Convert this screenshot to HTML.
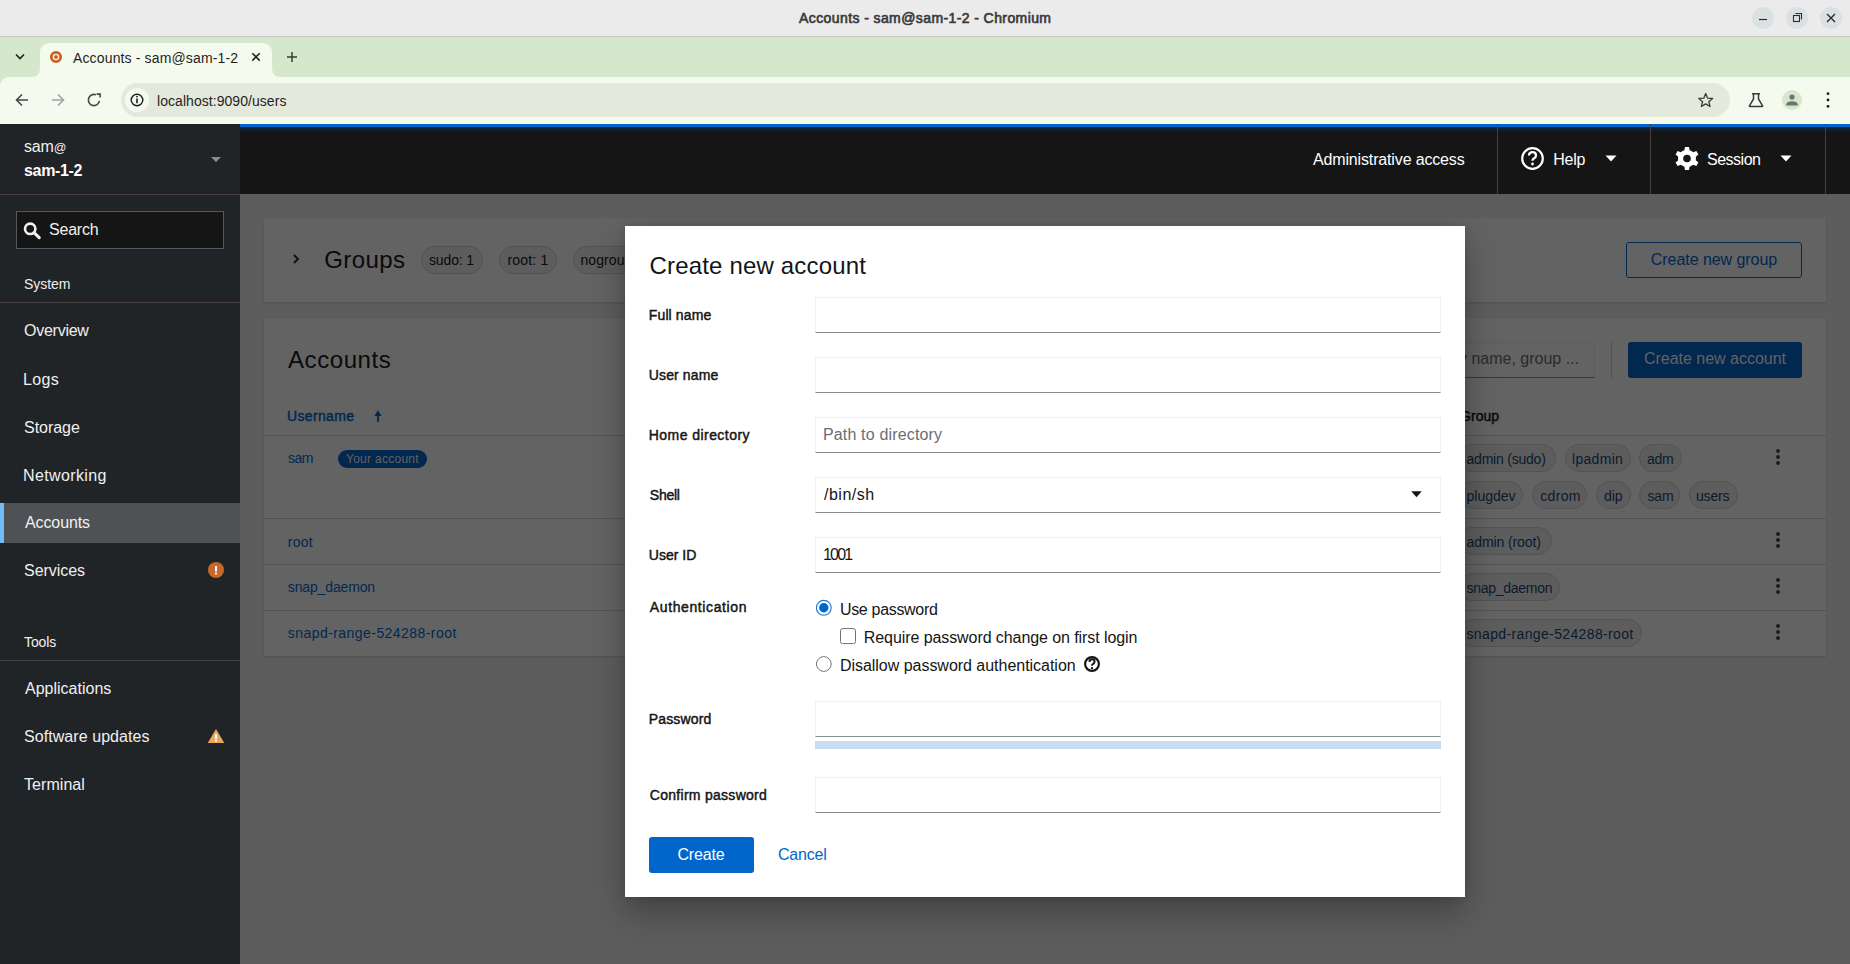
<!DOCTYPE html>
<html><head><meta charset="utf-8">
<style>
*{box-sizing:border-box;margin:0;padding:0}
html,body{width:1850px;height:964px;overflow:hidden;font-family:"Liberation Sans",sans-serif;background:#5d5d5d}
.a{position:absolute}
.t{white-space:nowrap}
svg{position:absolute;overflow:visible}
</style></head><body>
<div class="a" style="left:0px;top:0px;width:1850px;height:37px;background:#ebebeb"></div>
<div class="a" style="left:0px;top:36px;width:1850px;height:1px;background:#c9c9c9"></div>
<div id="t1" class="a t" style="left:799.00px;top:11.35px;font-size:14px;line-height:14px;color:#3a3a3a;letter-spacing:0.406px;-webkit-text-stroke:0.65px #3a3a3a">Accounts - sam@sam-1-2 - Chromium</div>
<div class="a" style="left:1752px;top:7px;width:22px;height:22px;border-radius:50%;background:#dbe1e3"></div>
<div class="a" style="left:1786px;top:7px;width:22px;height:22px;border-radius:50%;background:#dbe1e3"></div>
<div class="a" style="left:1820px;top:7px;width:22px;height:22px;border-radius:50%;background:#dbe1e3"></div>
<svg style="left:0;top:0" width="1850" height="36"><line x1="1759" y1="19.5" x2="1767" y2="19.5" stroke="#2b2b2b" stroke-width="1.2"/><rect x="1793.5" y="15.5" width="6" height="6" fill="none" stroke="#2b2b2b" stroke-width="1.1"/><path d="M1795.5 13.5 H1801.5 V19.5" fill="none" stroke="#2b2b2b" stroke-width="1.1"/><path d="M1827 14 L1835 22 M1835 14 L1827 22" stroke="#2b2b2b" stroke-width="1.4"/></svg>
<div class="a" style="left:0px;top:37px;width:1850px;height:40px;background:#d5e8cb"></div>
<div class="a" style="left:40px;top:43px;width:232px;height:40px;background:#f4faee;border-radius:9px 9px 0 0"></div>
<svg style="left:0;top:0" width="400" height="90"><path d="M31 77 Q40 77 40 68 L40 77 Z" fill="#f4faee"/><path d="M281 77 Q272 77 272 68 L272 77 Z" fill="#f4faee"/><path d="M16 54.5 L20 58.5 L24 54.5" fill="none" stroke="#1f1f1f" stroke-width="1.6"/><circle cx="56" cy="57" r="4.7" fill="none" stroke="#cc5f1d" stroke-width="2.8"/><circle cx="56" cy="57" r="1.9" fill="#cc5f1d"/><path d="M252.3 53.2 L259.7 60.6 M259.7 53.2 L252.3 60.6" stroke="#1f1f1f" stroke-width="1.5"/><path d="M287 57 H297 M292 52 V62" stroke="#3b3b3b" stroke-width="1.5"/></svg>
<div id="t2" class="a t" style="left:73.00px;top:50.65px;font-size:14px;line-height:14px;color:#1f1f1f;letter-spacing:0.143px;">Accounts - sam@sam-1-2</div>
<div class="a" style="left:0px;top:77px;width:1850px;height:47px;background:#f4faee"></div>
<div class="a" style="left:0px;top:77px;width:10px;height:10px;background:#d5e8cb"></div>
<div class="a" style="left:0px;top:77px;width:10px;height:10px;background:#f4faee;border-radius:9px 0 0 0"></div>
<div class="a" style="left:121px;top:83px;width:1609px;height:34px;background:#e3eadc;border-radius:17px"></div>
<div class="a" style="left:125px;top:88px;width:24px;height:24px;background:#f4faee;border-radius:50%"></div>
<svg style="left:0;top:0" width="1850" height="124"><path d="M28 100 H17 M22 94.5 L16.5 100 L22 105.5" fill="none" stroke="#474747" stroke-width="1.6"/><path d="M52 100 H63 M58 94.5 L63.5 100 L58 105.5" fill="none" stroke="#a3a3a3" stroke-width="1.6"/><path d="M95.9 94.74 A5.6 5.6 0 1 0 99.51 100.97" fill="none" stroke="#474747" stroke-width="1.6"/><path d="M96.6 94.1 H100.1 V97.6" fill="none" stroke="#474747" stroke-width="1.6"/><circle cx="137" cy="100" r="5.8" fill="none" stroke="#1f1f1f" stroke-width="1.4"/><path d="M137 98.6 V103.2" stroke="#1f1f1f" stroke-width="1.6"/><circle cx="137" cy="96.6" r="0.9" fill="#1f1f1f"/><path d="M1705.7 93.5 L1707.6 98.2 L1712.6 98.5 L1708.8 101.7 L1710 106.5 L1705.7 103.9 L1701.4 106.5 L1702.6 101.7 L1698.8 98.5 L1703.8 98.2 Z" fill="none" stroke="#3b3b3b" stroke-width="1.3" stroke-linejoin="round"/><path d="M1752 93.8 H1760 M1753.5 93.8 V99 L1749.6 105.6 Q1749 106.6 1750.2 106.6 H1761.8 Q1763 106.6 1762.4 105.6 L1758.5 99 V93.8" fill="none" stroke="#3b3b3b" stroke-width="1.5"/><circle cx="1792" cy="100" r="10" fill="#d5e8cb"/><circle cx="1792" cy="97" r="2.6" fill="#6a7572"/><path d="M1786 105.6 Q1786 101.3 1792 101.3 Q1798 101.3 1798 105.6 Z" fill="#6a7572"/><circle cx="1828" cy="93.7" r="1.4" fill="#1f1f1f"/><circle cx="1828" cy="100" r="1.4" fill="#1f1f1f"/><circle cx="1828" cy="106.3" r="1.4" fill="#1f1f1f"/></svg>
<div id="t3" class="a t" style="left:157.00px;top:93.65px;font-size:14px;line-height:14px;color:#1f1f1f;letter-spacing:0.053px;">localhost:9090/users</div>
<div class="a" style="left:0px;top:124px;width:240px;height:840px;background:#212427"></div>
<div id="t4" class="a t" style="left:24.00px;top:138.96px;font-size:16px;line-height:16px;color:#f0f0f0;letter-spacing:-0.2px">sam<span style="font-size:12.5px;letter-spacing:0">@</span></div>
<div id="t5" class="a t" style="left:24.00px;top:162.96px;font-size:16px;line-height:16px;font-weight:bold;color:#ffffff;letter-spacing:-0.333px;">sam-1-2</div>
<svg style="left:0;top:0" width="240" height="964"><path d="M211 157 H221 L216 162 Z" fill="#8a8d90"/></svg>
<div class="a" style="left:0px;top:194px;width:240px;height:1px;background:#4a3f3f"></div>
<div class="a" style="left:16px;top:211px;width:208px;height:38px;background:#151515;border:1px solid #56595d"></div>
<svg style="left:0;top:0" width="240" height="300"><circle cx="30.2" cy="228.8" r="5.2" fill="none" stroke="#f0f0f0" stroke-width="2.6"/><path d="M34 232.6 L39.2 237.6" stroke="#f0f0f0" stroke-width="3.2" stroke-linecap="round"/></svg>
<div id="t6" class="a t" style="left:49.00px;top:221.66px;font-size:16px;line-height:16px;color:#f0f0f0;letter-spacing:-0.200px;">Search</div>
<div id="t7" class="a t" style="left:24.00px;top:276.65px;font-size:14px;line-height:14px;color:#f0f0f0;letter-spacing:-0.040px;">System</div>
<div class="a" style="left:0px;top:302px;width:240px;height:1px;background:#4a3f3f"></div>
<div class="a" style="left:0px;top:503px;width:240px;height:40px;background:#4f5255"></div>
<div class="a" style="left:0px;top:503px;width:4px;height:40px;background:#73bcf7"></div>
<div id="t8" class="a t" style="left:24.00px;top:323.46px;font-size:16px;line-height:16px;color:#f0f0f0;letter-spacing:-0.251px;">Overview</div>
<div id="t9" class="a t" style="left:23.00px;top:371.56px;font-size:16px;line-height:16px;color:#f0f0f0;letter-spacing:0.333px;">Logs</div>
<div id="t10" class="a t" style="left:24.00px;top:419.66px;font-size:16px;line-height:16px;color:#f0f0f0;letter-spacing:-0.035px;">Storage</div>
<div id="t11" class="a t" style="left:23.00px;top:467.56px;font-size:16px;line-height:16px;color:#f0f0f0;letter-spacing:0.379px;">Networking</div>
<div id="t12" class="a t" style="left:25.00px;top:515.26px;font-size:16px;line-height:16px;color:#f0f0f0;letter-spacing:-0.108px;">Accounts</div>
<div id="t13" class="a t" style="left:24.00px;top:562.96px;font-size:16px;line-height:16px;color:#f0f0f0;letter-spacing:-0.035px;">Services</div>
<div id="t14" class="a t" style="left:24.00px;top:634.65px;font-size:14px;line-height:14px;color:#f0f0f0;letter-spacing:-0.100px;">Tools</div>
<div class="a" style="left:0px;top:660px;width:240px;height:1px;background:#4a3f3f"></div>
<div id="t15" class="a t" style="left:25.00px;top:680.96px;font-size:16px;line-height:16px;color:#f0f0f0;letter-spacing:-0.000px;">Applications</div>
<div id="t16" class="a t" style="left:24.00px;top:729.26px;font-size:16px;line-height:16px;color:#f0f0f0;letter-spacing:0.067px;">Software updates</div>
<div id="t17" class="a t" style="left:24.00px;top:776.96px;font-size:16px;line-height:16px;color:#f0f0f0;letter-spacing:0.054px;">Terminal</div>
<svg style="left:0;top:0" width="240" height="964"><circle cx="216" cy="570" r="8" fill="#c7672c"/><path d="M216 566 V571.6" stroke="#fff" stroke-width="2"/><rect x="215" y="572.6" width="2" height="1.8" fill="#fff"/><path d="M216 728.9 L224.3 743 H207.7 Z" fill="#eaa85c"/><rect x="215.1" y="734.2" width="1.9" height="5" fill="#fff"/><rect x="215.1" y="739.8" width="1.9" height="1.8" fill="#fff"/></svg>
<div class="a" style="left:240px;top:124px;width:1610px;height:70px;background:#151515"></div>
<div class="a" style="left:240px;top:124px;width:1610px;height:3px;background:#0066cc"></div>
<div class="a" style="left:240px;top:127px;width:1610px;height:5px;background:linear-gradient(rgba(0,70,150,.45),rgba(0,50,120,0))"></div>
<div class="a" style="left:1497px;top:124px;width:1px;height:70px;background:#4a3e3e"></div>
<div class="a" style="left:1650px;top:124px;width:1px;height:70px;background:#4a3e3e"></div>
<div class="a" style="left:1825px;top:124px;width:1px;height:70px;background:#4a3e3e"></div>
<div id="t18" class="a t" style="left:1313.00px;top:151.66px;font-size:16px;line-height:16px;color:#ffffff;letter-spacing:-0.150px;">Administrative access</div>
<div id="t19" class="a t" style="left:1553.20px;top:151.66px;font-size:16px;line-height:16px;color:#ffffff;letter-spacing:-0.203px;">Help</div>
<div id="t20" class="a t" style="left:1707.00px;top:151.66px;font-size:16px;line-height:16px;color:#ffffff;letter-spacing:-0.500px;">Session</div>
<svg style="left:0;top:0" width="1850" height="200"><circle cx="1532.5" cy="158.5" r="10.3" fill="none" stroke="#fff" stroke-width="2.2"/><path d="M1529 155.6 Q1529 152.2 1532.5 152.2 Q1536 152.2 1536 155.4 Q1536 157.4 1533.6 158.6 Q1532.5 159.3 1532.5 160.8" fill="none" stroke="#fff" stroke-width="2.3"/><circle cx="1532.5" cy="164" r="1.4" fill="#fff"/><path d="M1605.5 155.5 H1616.5 L1611 161.5 Z" fill="#fff"/><path d="M1780.5 155.5 H1791.5 L1786 161.5 Z" fill="#fff"/><g transform="translate(1687 158.5)"><path d="M-2 -11.5 H2 L2.6 -8.2 Q4.6 -7.5 6.2 -6.3 L9.4 -7.4 L11.4 -4 L8.8 -1.7 Q9.1 0 8.8 1.7 L11.4 4 L9.4 7.4 L6.2 6.3 Q4.6 7.5 2.6 8.2 L2 11.5 H-2 L-2.6 8.2 Q-4.6 7.5 -6.2 6.3 L-9.4 7.4 L-11.4 4 L-8.8 1.7 Q-9.1 0 -8.8 -1.7 L-11.4 -4 L-9.4 -7.4 L-6.2 -6.3 Q-4.6 -7.5 -2.6 -8.2 Z" fill="#fff"/><circle cx="0" cy="0" r="3.8" fill="#151515"/></g></svg>
<div class="a" style="left:240px;top:194px;width:1610px;height:770px;background:#5d5d5d"></div>
<div class="a" style="left:264px;top:218px;width:1562px;height:84px;background:#636363;box-shadow:0 1px 2px rgba(3,3,3,.12)"></div>
<div class="a" style="left:264px;top:318px;width:1562px;height:338px;background:#636363;box-shadow:0 1px 2px rgba(3,3,3,.12)"></div>
<svg style="left:0;top:0" width="1850" height="964"><path d="M294 255 L298 259 L294 263" fill="none" stroke="#0e0e0e" stroke-width="1.8"/></svg>
<div id="t21" class="a t" style="left:324.20px;top:247.68px;font-size:24px;line-height:24px;color:#0a0a0a;letter-spacing:0.400px;">Groups</div>
<div class="a" style="left:421px;top:246px;width:62px;height:28px;background:#5d5d5d;border:1px solid #535353;border-radius:14px"></div>
<div id="t22" class="a t" style="left:429.00px;top:253.25px;font-size:14px;line-height:14px;color:#0a0a0a;letter-spacing:-0.136px;">sudo: 1</div>
<div class="a" style="left:499px;top:246px;width:58px;height:28px;background:#5d5d5d;border:1px solid #535353;border-radius:14px"></div>
<div id="t23" class="a t" style="left:507.50px;top:253.25px;font-size:14px;line-height:14px;color:#0a0a0a;letter-spacing:0.167px;">root: 1</div>
<div class="a" style="left:573px;top:246px;width:87px;height:28px;background:#5d5d5d;border:1px solid #535353;border-radius:14px"></div>
<div id="t24" class="a t" style="left:580.40px;top:253.25px;font-size:14px;line-height:14px;color:#0a0a0a;letter-spacing:0.111px;">nogroup: 1</div>
<div class="a" style="left:1626px;top:242px;width:176px;height:36px;border:1px solid #022850;border-radius:3px"></div>
<div id="t25" class="a t" style="left:1650.80px;top:251.76px;font-size:16px;line-height:16px;color:#022850;letter-spacing:-0.054px;">Create new group</div>
<div id="t26" class="a t" style="left:288.00px;top:348.18px;font-size:24px;line-height:24px;color:#0a0a0a;letter-spacing:0.571px;">Accounts</div>
<div class="a" style="left:1350px;top:342px;width:245px;height:36px;background:#636363;border:1px solid #5d5d5d;border-bottom-color:#35363a"></div>
<div id="t27" class="a t" style="right:271px;top:350.86px;font-size:16px;line-height:16px;color:#2a2b2d;">Filter by name, group ...</div>
<div class="a" style="left:1611px;top:342px;width:1px;height:36px;background:#535353"></div>
<div class="a" style="left:1628px;top:342px;width:174px;height:36px;background:#022850;border-radius:3px"></div>
<div id="t28" class="a t" style="left:1643.90px;top:350.86px;font-size:16px;line-height:16px;color:#636363;letter-spacing:-0.008px;">Create new account</div>
<div id="t29" class="a t" style="left:287.00px;top:408.85px;font-size:14px;line-height:14px;color:#022850;letter-spacing:0.340px;-webkit-text-stroke:0.45px #022850">Username</div>
<svg style="left:0;top:0" width="1850" height="964"><path d="M378 414 V422" stroke="#022850" stroke-width="1.8"/><path d="M374.4 416 L378 410.2 L381.6 416 Z" fill="#022850"/></svg>
<div id="t30" class="a t" style="right:351px;top:408.85px;font-size:14px;line-height:14px;color:#0a0a0a;-webkit-text-stroke:0.45px #0a0a0a">Group</div>
<div class="a" style="left:264px;top:435px;width:1562px;height:1px;background:#535353"></div>
<div class="a" style="left:264px;top:518px;width:1562px;height:1px;background:#535353"></div>
<div class="a" style="left:264px;top:564px;width:1562px;height:1px;background:#535353"></div>
<div class="a" style="left:264px;top:610px;width:1562px;height:1px;background:#535353"></div>
<div id="t31" class="a t" style="left:288.00px;top:450.95px;font-size:14px;line-height:14px;color:#022850;letter-spacing:-0.500px;">sam</div>
<div class="a" style="left:338px;top:450px;width:89px;height:18px;background:#022850;border-radius:9px"></div>
<div id="t32" class="a t" style="left:346.00px;top:453.34px;font-size:12px;line-height:12px;color:#636363;letter-spacing:0.273px;">Your account</div>
<div id="t33" class="a t" style="left:287.80px;top:534.65px;font-size:14px;line-height:14px;color:#022850;letter-spacing:0.264px;">root</div>
<div id="t34" class="a t" style="left:287.80px;top:580.25px;font-size:14px;line-height:14px;color:#022850;letter-spacing:-0.140px;">snap_daemon</div>
<div id="t35" class="a t" style="left:287.80px;top:626.45px;font-size:14px;line-height:14px;color:#022850;letter-spacing:0.442px;">snapd-range-524288-root</div>
<div class="a" style="left:1458px;top:444px;width:98px;height:28px;background:#5d5d5d;border:1px solid #535353;border-radius:14px"></div>
<div id="t36" class="a t" style="left:1466.50px;top:451.85px;font-size:14px;line-height:14px;color:#0b1a2e;letter-spacing:-0.217px;">admin (sudo)</div>
<div class="a" style="left:1565px;top:444px;width:66px;height:28px;background:#5d5d5d;border:1px solid #535353;border-radius:14px"></div>
<div id="t37" class="a t" style="left:1572.00px;top:451.85px;font-size:14px;line-height:14px;color:#0b1a2e;letter-spacing:0.299px;">lpadmin</div>
<div class="a" style="left:1639px;top:444px;width:43px;height:28px;background:#5d5d5d;border:1px solid #535353;border-radius:14px"></div>
<div id="t38" class="a t" style="left:1647.00px;top:451.85px;font-size:14px;line-height:14px;color:#0b1a2e;letter-spacing:-0.300px;">adm</div>
<div class="a" style="left:1458px;top:481px;width:65px;height:28px;background:#5d5d5d;border:1px solid #535353;border-radius:14px"></div>
<div id="t39" class="a t" style="left:1466.50px;top:488.65px;font-size:14px;line-height:14px;color:#0b1a2e;letter-spacing:0.003px;">plugdev</div>
<div class="a" style="left:1532px;top:481px;width:55px;height:28px;background:#5d5d5d;border:1px solid #535353;border-radius:14px"></div>
<div id="t40" class="a t" style="left:1540.20px;top:488.65px;font-size:14px;line-height:14px;color:#0b1a2e;letter-spacing:0.350px;">cdrom</div>
<div class="a" style="left:1596px;top:481px;width:35px;height:28px;background:#5d5d5d;border:1px solid #535353;border-radius:14px"></div>
<div id="t41" class="a t" style="left:1604.00px;top:488.65px;font-size:14px;line-height:14px;color:#0b1a2e;letter-spacing:-0.100px;">dip</div>
<div class="a" style="left:1639px;top:481px;width:41px;height:28px;background:#5d5d5d;border:1px solid #535353;border-radius:14px"></div>
<div id="t42" class="a t" style="left:1647.50px;top:488.65px;font-size:14px;line-height:14px;color:#0b1a2e;letter-spacing:-0.200px;">sam</div>
<div class="a" style="left:1689px;top:481px;width:49px;height:28px;background:#5d5d5d;border:1px solid #535353;border-radius:14px"></div>
<div id="t43" class="a t" style="left:1696.00px;top:488.65px;font-size:14px;line-height:14px;color:#0b1a2e;letter-spacing:-0.200px;">users</div>
<div class="a" style="left:1458px;top:527px;width:94px;height:28px;background:#5d5d5d;border:1px solid #535353;border-radius:14px"></div>
<div id="t44" class="a t" style="left:1466.50px;top:534.85px;font-size:14px;line-height:14px;color:#0b1a2e;letter-spacing:-0.091px;">admin (root)</div>
<div class="a" style="left:1458px;top:573px;width:102px;height:28px;background:#5d5d5d;border:1px solid #535353;border-radius:14px"></div>
<div id="t45" class="a t" style="left:1466.50px;top:580.65px;font-size:14px;line-height:14px;color:#0b1a2e;letter-spacing:-0.280px;">snap_daemon</div>
<div class="a" style="left:1458px;top:619px;width:184px;height:28px;background:#5d5d5d;border:1px solid #535353;border-radius:14px"></div>
<div id="t46" class="a t" style="left:1466.50px;top:626.65px;font-size:14px;line-height:14px;color:#0b1a2e;letter-spacing:0.363px;">snapd-range-524288-root</div>
<svg style="left:0;top:0" width="1850" height="964">
<circle cx="1778" cy="451" r="1.9" fill="#1a1a1a"/><circle cx="1778" cy="457" r="1.9" fill="#1a1a1a"/><circle cx="1778" cy="463" r="1.9" fill="#1a1a1a"/>
<circle cx="1778" cy="534" r="1.9" fill="#1a1a1a"/><circle cx="1778" cy="540" r="1.9" fill="#1a1a1a"/><circle cx="1778" cy="546" r="1.9" fill="#1a1a1a"/>
<circle cx="1778" cy="580" r="1.9" fill="#1a1a1a"/><circle cx="1778" cy="586" r="1.9" fill="#1a1a1a"/><circle cx="1778" cy="592" r="1.9" fill="#1a1a1a"/>
<circle cx="1778" cy="626" r="1.9" fill="#1a1a1a"/><circle cx="1778" cy="632" r="1.9" fill="#1a1a1a"/><circle cx="1778" cy="638" r="1.9" fill="#1a1a1a"/>
</svg>
<div class="a" style="left:625px;top:226px;width:840px;height:671px;background:#fff;box-shadow:0 16px 32px rgba(3,3,3,.3),0 0 8px rgba(3,3,3,.12)"></div>
<div id="t47" class="a t" style="left:649.50px;top:254.18px;font-size:24px;line-height:24px;color:#151515;letter-spacing:0.177px;">Create new account</div>
<div id="t48" class="a t" style="left:648.80px;top:307.85px;font-size:14px;line-height:14px;color:#151515;letter-spacing:0.125px;-webkit-text-stroke:0.45px #151515">Full name</div>
<div id="t49" class="a t" style="left:648.80px;top:367.85px;font-size:14px;line-height:14px;color:#151515;letter-spacing:0.125px;-webkit-text-stroke:0.45px #151515">User name</div>
<div id="t50" class="a t" style="left:648.80px;top:428.25px;font-size:14px;line-height:14px;color:#151515;letter-spacing:0.444px;-webkit-text-stroke:0.45px #151515">Home directory</div>
<div id="t51" class="a t" style="left:649.80px;top:488.15px;font-size:14px;line-height:14px;color:#151515;letter-spacing:-0.250px;-webkit-text-stroke:0.45px #151515">Shell</div>
<div id="t52" class="a t" style="left:648.80px;top:548.15px;font-size:14px;line-height:14px;color:#151515;letter-spacing:-0.000px;-webkit-text-stroke:0.45px #151515">User ID</div>
<div id="t53" class="a t" style="left:649.80px;top:600.25px;font-size:14px;line-height:14px;color:#151515;letter-spacing:0.615px;-webkit-text-stroke:0.45px #151515">Authentication</div>
<div id="t54" class="a t" style="left:648.80px;top:712.05px;font-size:14px;line-height:14px;color:#151515;letter-spacing:0.142px;-webkit-text-stroke:0.45px #151515">Password</div>
<div id="t55" class="a t" style="left:649.80px;top:788.05px;font-size:14px;line-height:14px;color:#151515;letter-spacing:0.282px;-webkit-text-stroke:0.45px #151515">Confirm password</div>
<div class="a" style="left:815px;top:297px;width:626px;height:36px;background:#fff;border:1px solid #f0f0f0;border-bottom-color:#8a8d90"></div>
<div class="a" style="left:815px;top:357px;width:626px;height:36px;background:#fff;border:1px solid #f0f0f0;border-bottom-color:#8a8d90"></div>
<div class="a" style="left:815px;top:417px;width:626px;height:36px;background:#fff;border:1px solid #f0f0f0;border-bottom-color:#8a8d90"></div>
<div class="a" style="left:815px;top:477px;width:626px;height:36px;background:#fff;border:1px solid #f0f0f0;border-bottom-color:#8a8d90"></div>
<div class="a" style="left:815px;top:537px;width:626px;height:36px;background:#fff;border:1px solid #f0f0f0;border-bottom-color:#8a8d90"></div>
<div class="a" style="left:815px;top:701px;width:626px;height:36px;background:#fff;border:1px solid #f0f0f0;border-bottom-color:#8a8d90"></div>
<div class="a" style="left:815px;top:777px;width:626px;height:36px;background:#fff;border:1px solid #f0f0f0;border-bottom-color:#8a8d90"></div>
<div id="t56" class="a t" style="left:822.90px;top:427.36px;font-size:16px;line-height:16px;color:#6a6e73;letter-spacing:0.170px;">Path to directory</div>
<div id="t57" class="a t" style="left:824.00px;top:487.26px;font-size:16px;line-height:16px;color:#151515;letter-spacing:0.500px;">/bin/sh</div>
<div id="t58" class="a t" style="left:823.00px;top:547.26px;font-size:16px;line-height:16px;color:#151515;letter-spacing:-1.797px;">1001</div>
<div class="a" style="left:815px;top:741px;width:626px;height:8px;background:#c9ddf1"></div>
<svg style="left:0;top:0" width="1850" height="964"><path d="M1411.3 491.3 H1421.7 L1416.5 497.3 Z" fill="#151515"/><circle cx="823.8" cy="607.8" r="7.4" fill="#fff" stroke="#1a74d6" stroke-width="1.1"/><circle cx="823.8" cy="607.8" r="4.7" fill="#0066cc"/><rect x="840.5" y="628.6" width="15" height="15" rx="2" fill="#fff" stroke="#6f6f6f" stroke-width="1"/><circle cx="823.8" cy="664" r="7.4" fill="#fff" stroke="#767676" stroke-width="1"/><circle cx="1092" cy="664" r="6.9" fill="none" stroke="#151515" stroke-width="2.2"/><path d="M1089.5 662 Q1089.5 659.3 1092 659.3 Q1094.6 659.3 1094.6 661.7 Q1094.6 663.2 1092.9 664 Q1092 664.5 1092 665.8" fill="none" stroke="#151515" stroke-width="2"/><circle cx="1092" cy="668.2" r="1.15" fill="#151515"/></svg>
<div id="t59" class="a t" style="left:839.90px;top:601.96px;font-size:16px;line-height:16px;color:#151515;letter-spacing:-0.311px;">Use password</div>
<div id="t60" class="a t" style="left:863.80px;top:629.56px;font-size:16px;line-height:16px;color:#151515;letter-spacing:-0.080px;">Require password change on first login</div>
<div id="t61" class="a t" style="left:839.90px;top:657.96px;font-size:16px;line-height:16px;color:#151515;letter-spacing:-0.026px;">Disallow password authentication</div>
<div class="a" style="left:649px;top:837px;width:105px;height:36px;background:#0066cc;border-radius:3px"></div>
<div id="t62" class="a t" style="left:677.50px;top:846.96px;font-size:16px;line-height:16px;color:#ffffff;letter-spacing:-0.200px;">Create</div>
<div id="t63" class="a t" style="left:778.00px;top:846.96px;font-size:16px;line-height:16px;color:#0066cc;letter-spacing:-0.200px;">Cancel</div>
</body></html>
